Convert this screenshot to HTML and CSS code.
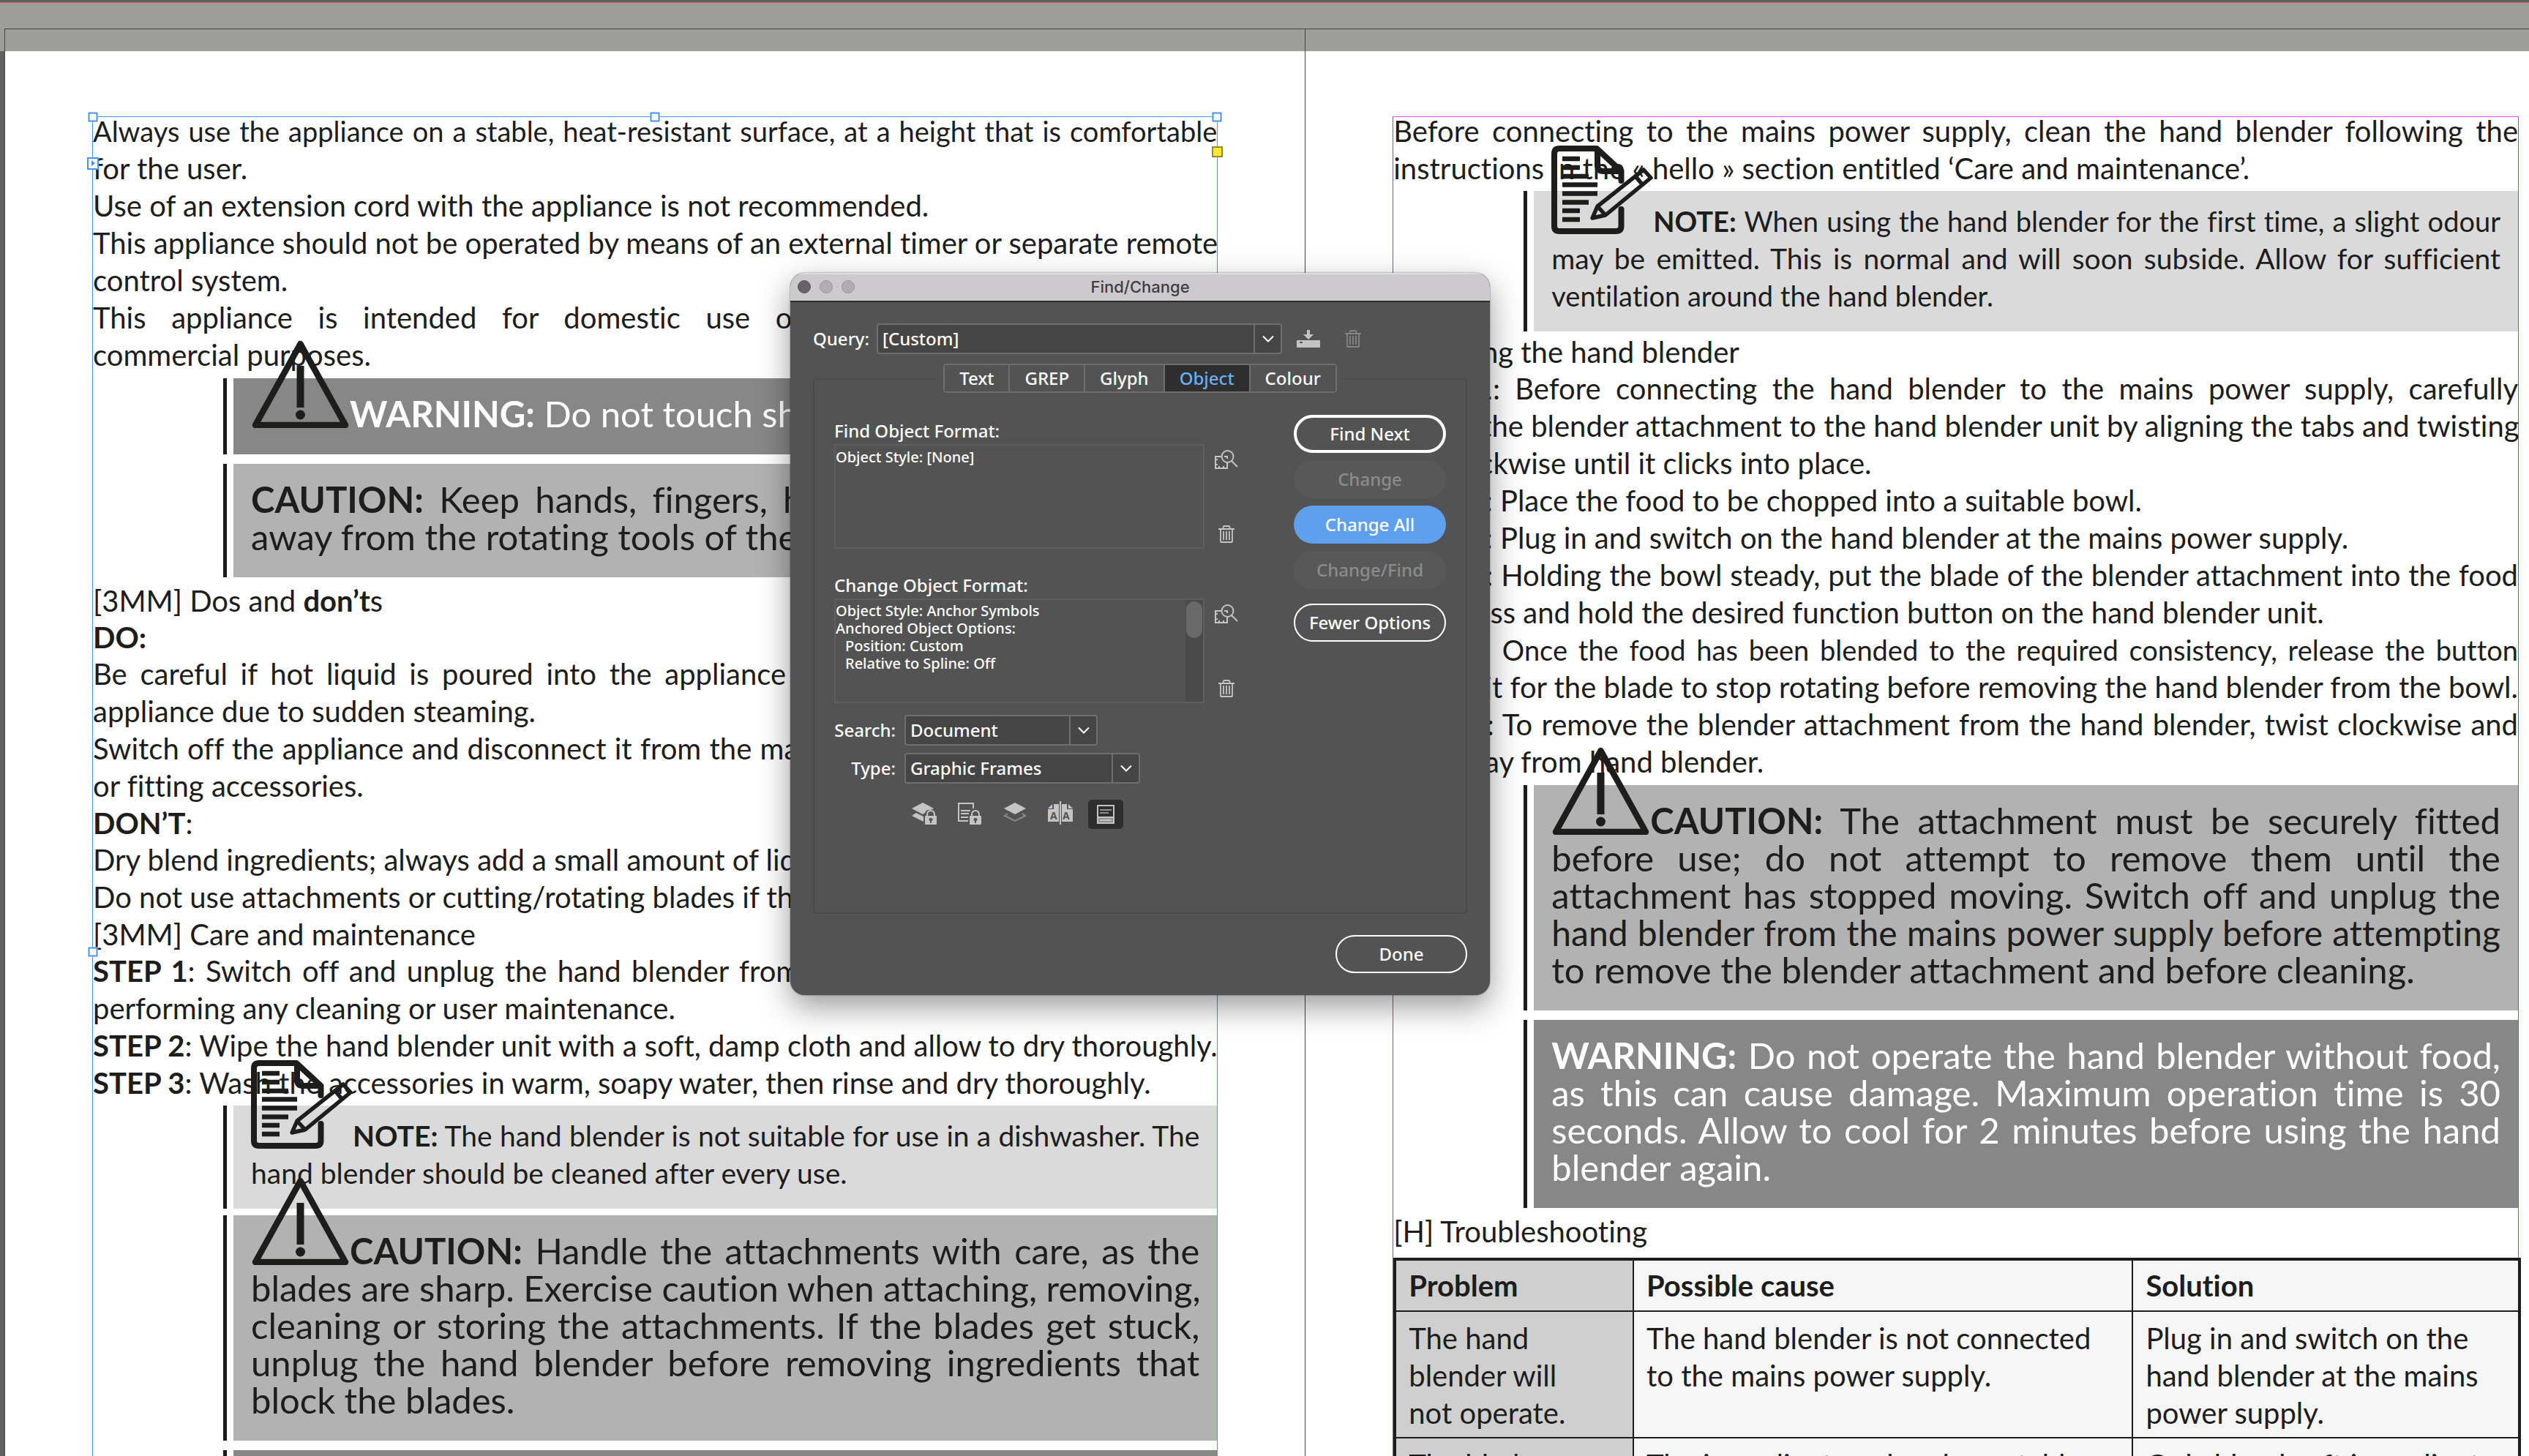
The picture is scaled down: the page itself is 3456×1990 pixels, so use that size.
FILE: index.html
```html
<!DOCTYPE html>
<html lang="en">
<head>
    <meta charset="UTF-8">
    <meta name="viewport" content="width=device-width, initial-scale=1.0">
    <title>Find/Change</title>
    <link rel="stylesheet" href="styles.css">
</head>
<body>
    <svg class="defs" aria-hidden="true">
        <symbol id="i-warning" viewBox="0 0 135 121">
            <path d="M67.500 6 L6 117 H129 Z" fill="none" stroke="#1d1d1b" stroke-width="8.500" stroke-linejoin="round"/>
            <path d="M62.500 36 H72.500 V93 H62.500 Z" fill="#1d1d1b"/>
            <circle cx="67.500" cy="103" r="6.500" fill="#1d1d1b"/>
        </symbol>
        <symbol id="i-note" viewBox="0 0 139 121">
            <g fill="none" stroke="#1d1d1b" stroke-width="8">
                <path d="M95.500 87 V110 Q95.500 117 88 117 H11 Q4 117 4 110 V11 Q4 4 11 4 H62 L95.500 35 V48" stroke-linecap="round" stroke-linejoin="round"/>
                <path d="M63 5 V26 Q63 35 71 35 H95"/>
            </g>
            <path d="M15 18 H39 M15 30 H39 M15 42 H51 M15 53.500 H63 M15 65.500 H63 M15 77.500 H51 M15 89 H39 M15 101 H39" stroke="#1d1d1b" stroke-width="6.500" fill="none"/>
            <path d="M126 33 L136 44 L74 95 L56 99 L63 83 Z M63 83 L74 95 M115 42 L125 54" fill="none" stroke="#1d1d1b" stroke-width="5.500" stroke-linejoin="round"/>
        </symbol>
        <symbol id="i-trash" viewBox="0 0 22 24">
            <path d="M0 5 H22 M3 5 V22 Q3 23 4 23 H18 Q19 23 19 22 V5 M6.500 5 V3 Q6.500 1 8.500 1 H13.500 Q15.500 1 15.500 3 V5 M7 8 V20 M11 8 V20 M15 8 V20" fill="none" stroke="currentColor" stroke-width="1.800"/>
        </symbol>
        <symbol id="i-specify" viewBox="0 0 32 26">
            <path d="M9 9 H1 V25 H17 V17 M13 9 H17 V12 M1 13 H4 M1 20 H4 M6 25 V22 M12 25 V22" fill="none" stroke="currentColor" stroke-width="2"/>
            <circle cx="17.500" cy="9" r="8" fill="none" stroke="currentColor" stroke-width="2"/>
            <path d="M23 15 L31 23" stroke="currentColor" stroke-width="2"/>
        </symbol>
        <symbol id="i-chevron" viewBox="0 0 16 10">
            <path d="M1 1.500 L8 8.500 L15 1.500" fill="none" stroke="#fff" stroke-width="2"/>
        </symbol>
        <symbol id="i-save" viewBox="0 0 32 24">
            <path d="M14 0 H18 V6 H23 L16 13 L9 6 H14 Z M1 14 H31 Q32 14 32 15 V23 Q32 24 31 24 H1 Q0 24 0 23 V15 Q0 14 1 14 Z M4 16 V18 H8 V16 Z" fill="currentColor" fill-rule="evenodd"/>
        </symbol>
        <symbol id="i-lock" viewBox="0 0 16 20">
            <path d="M3 9 V7 Q3 1 8 1 Q13 1 13 7 V9" fill="none" stroke="currentColor" stroke-width="2"/>
            <path d="M1 8 H15 Q16 8 16 9 V19 Q16 20 15 20 H1 Q0 20 0 19 V9 Q0 8 1 8 Z" fill="currentColor"/>
            <path d="M8 11 A2 2 0 0 1 9 15 V18 H7 V15 A2 2 0 0 1 8 11 Z" fill="#535353"/>
        </symbol>
    </svg>

    <div class="ruler-edge"></div>
    <div class="pasteboard"></div>

    <main class="spread">
        <div class="bleed"></div>
        <section class="page page-left">
            <div class="frame frame-selected">
                <i class="handle top-left"></i>
                <i class="handle top-mid"></i>
                <i class="handle top-right"></i>
                <i class="handle mid-left"></i>
                <i class="port"></i>
                <i class="anchor-mark"></i>
                <div class="story">
                    <p>
                        <span class="line full tight">Always use the appliance on a stable, heat-resistant surface, at a height that is comfortable</span>
                        <span class="line">for the user.</span>
                    </p>
                    <p><span class="line">Use of an extension cord with the appliance is not recommended.</span></p>
                    <p>
                        <span class="line full">This appliance should not be operated by means of an external timer or separate remote</span>
                        <span class="line">control system.</span>
                    </p>
                    <p>
                        <span class="line full">This appliance is intended for domestic use only and is not intended for</span>
                        <span class="line">commercial purposes.</span>
                    </p>
                    <div class="callout warning">
                        <svg class="callout-icon"><use href="#i-warning"/></svg>
                        <span class="line indent"><b>WARNING:</b> Do not touch sharp blades.</span>
                    </div>
                    <div class="callout caution">
                        <span class="line full"><b>CAUTION:</b> Keep hands, fingers, hair, clothing and utensils</span>
                        <span class="line">away from the rotating tools of the appliance.</span>
                    </div>
                    <h2>[3MM] Dos and <b>don’t</b>s</h2>
                    <h2><b>DO:</b></h2>
                    <p>
                        <span class="line full">Be careful if hot liquid is poured into the appliance as it can be ejected out of the</span>
                        <span class="line">appliance due to sudden steaming.</span>
                    </p>
                    <p>
                        <span class="line full">Switch off the appliance and disconnect it from the mains power supply when changing</span>
                        <span class="line">or fitting accessories.</span>
                    </p>
                    <h2><b>DON’T</b>:</h2>
                    <p><span class="line">Dry blend ingredients; always add a small amount of liquid.</span></p>
                    <p><span class="line">Do not use attachments or cutting/rotating blades if they are damaged.</span></p>
                    <h2>[3MM] Care and maintenance</h2>
                    <p>
                        <span class="line full"><b>STEP 1</b>: Switch off and unplug the hand blender from the mains power supply before</span>
                        <span class="line">performing any cleaning or user maintenance.</span>
                    </p>
                    <p><span class="line full"><b>STEP 2</b>: Wipe the hand blender unit with a soft, damp cloth and allow to dry thoroughly.</span></p>
                    <p><span class="line"><b>STEP 3</b>: Wash the accessories in warm, soapy water, then rinse and dry thoroughly.</span></p>
                    <div class="callout note">
                        <svg class="callout-icon"><use href="#i-note"/></svg>
                        <span class="line full indent"><b>NOTE:</b> The hand blender is not suitable for use in a dishwasher. The</span>
                        <span class="line">hand blender should be cleaned after every use.</span>
                    </div>
                    <div class="callout caution">
                        <svg class="callout-icon"><use href="#i-warning"/></svg>
                        <span class="line full indent"><b>CAUTION:</b> Handle the attachments with care, as the</span>
                        <span class="line full">blades are sharp. Exercise caution when attaching, removing,</span>
                        <span class="line full">cleaning or storing the attachments. If the blades get stuck,</span>
                        <span class="line full">unplug the hand blender before removing ingredients that</span>
                        <span class="line">block the blades.</span>
                    </div>
                    <div class="callout warning">
                        <span class="line"><b>WARNING:</b> Do not immerse the unit in water.</span>
                    </div>
                </div>
            </div>
        </section>

        <section class="page page-right">
            <div class="frame">
                <div class="story">
                    <p>
                        <span class="line full">Before connecting to the mains power supply, clean the hand blender following the</span>
                        <span class="line">instructions in the « hello » section entitled ‘Care and maintenance’.</span>
                    </p>
                    <div class="callout note">
                        <svg class="callout-icon"><use href="#i-note"/></svg>
                        <span class="line full indent tight"><b>NOTE:</b> When using the hand blender for the first time, a slight odour</span>
                        <span class="line full">may be emitted. This is normal and will soon subside. Allow for sufficient</span>
                        <span class="line tight">ventilation around the hand blender.</span>
                    </div>
                    <h2>[H] Using the hand blender</h2>
                    <p>
                        <span class="line full"><b>STEP 1</b>: Before connecting the hand blender to the mains power supply, carefully</span>
                        <span class="line full">attach the blender attachment to the hand blender unit by aligning the tabs and twisting</span>
                        <span class="line">anticlockwise until it clicks into place.</span>
                    </p>
                    <p><span class="line"><b>STEP 2</b>: Place the food to be chopped into a suitable bowl.</span></p>
                    <p><span class="line"><b>STEP 3</b>: Plug in and switch on the hand blender at the mains power supply.</span></p>
                    <p>
                        <span class="line full"><b>STEP 4</b>: Holding the bowl steady, put the blade of the blender attachment into the food</span>
                        <span class="line">and press and hold the desired function button on the hand blender unit.</span>
                    </p>
                    <p>
                        <span class="line full tight"><b>STEP 5</b>: Once the food has been blended to the required consistency, release the button</span>
                        <span class="line full">and wait for the blade to stop rotating before removing the hand blender from the bowl.</span>
                    </p>
                    <p>
                        <span class="line full"><b>STEP 6</b>: To remove the blender attachment from the hand blender, twist clockwise and</span>
                        <span class="line">pull away from hand blender.</span>
                    </p>
                    <div class="callout caution">
                        <svg class="callout-icon"><use href="#i-warning"/></svg>
                        <span class="line full indent"><b>CAUTION:</b> The attachment must be securely fitted</span>
                        <span class="line full">before use; do not attempt to remove them until the</span>
                        <span class="line full">attachment has stopped moving. Switch off and unplug the</span>
                        <span class="line full tight">hand blender from the mains power supply before attempting</span>
                        <span class="line">to remove the blender attachment and before cleaning.</span>
                    </div>
                    <div class="callout warning">
                        <span class="line full"><b>WARNING:</b> Do not operate the hand blender without food,</span>
                        <span class="line full">as this can cause damage. Maximum operation time is 30</span>
                        <span class="line full">seconds. Allow to cool for 2 minutes before using the hand</span>
                        <span class="line">blender again.</span>
                    </div>
                    <h2>[H] Troubleshooting</h2>
                    <table class="troubleshooting">
                        <thead>
                            <tr><th>Problem</th><th>Possible cause</th><th>Solution</th></tr>
                        </thead>
                        <tbody>
                            <tr>
                                <td>The hand<br>blender will<br>not operate.</td>
                                <td>The hand blender is not connected<br>to the mains power supply.</td>
                                <td>Plug in and switch on the<br>hand blender at the mains<br>power supply.</td>
                            </tr>
                            <tr>
                                <td>The blades</td>
                                <td>The ingredients or bowl are stable</td>
                                <td>Only blend soft ingredients</td>
                            </tr>
                        </tbody>
                    </table>
                </div>
            </div>
        </section>
    </main>

    <div class="dialog" role="dialog" aria-labelledby="dialog-title">
        <header class="titlebar">
            <div class="lights">
                <button class="light close" aria-label="Close"></button>
                <button class="light" aria-label="Minimise"></button>
                <button class="light" aria-label="Zoom"></button>
            </div>
            <h1 id="dialog-title">Find/Change</h1>
        </header>
        <div class="dialog-body">
            <div class="query-row">
                <label for="query">Query:</label>
                <div class="select query">
                    <select id="query"><option>[Custom]</option></select>
                    <svg class="chevron"><use href="#i-chevron"/></svg>
                </div>
                <button class="icon-btn save" aria-label="Save query"><svg width="32" height="24"><use href="#i-save"/></svg></button>
                <button class="icon-btn" aria-label="Delete query" disabled><svg width="22" height="26"><use href="#i-trash"/></svg></button>
            </div>

            <div class="panel">
                <div class="tabs" role="tablist">
                    <button class="tab" role="tab">Text</button>
                    <button class="tab" role="tab">GREP</button>
                    <button class="tab" role="tab">Glyph</button>
                    <button class="tab active" role="tab" aria-selected="true">Object</button>
                    <button class="tab" role="tab">Colour</button>
                </div>
                <div class="panel-columns">
                    <div class="formats">
                        <div class="format">
                            <h3>Find Object Format:</h3>
                            <div class="format-row">
                                <div class="format-box">Object Style: [None]</div>
                                <div class="format-tools">
                                    <button class="icon-btn" aria-label="Specify attributes to find"><svg width="32" height="26"><use href="#i-specify"/></svg></button>
                                    <button class="icon-btn" aria-label="Clear find attributes"><svg width="22" height="24"><use href="#i-trash"/></svg></button>
                                </div>
                            </div>
                        </div>
                        <div class="format">
                            <h3>Change Object Format:</h3>
                            <div class="format-row">
                                <div class="format-box scrolls">
                                    <div>
                                        Object Style: Anchor Symbols<br>
                                        Anchored Object Options:
                                        <div class="sub">Position: Custom<br>Relative to Spline: Off</div>
                                    </div>
                                    <div class="track"><div class="thumb"></div></div>
                                </div>
                                <div class="format-tools">
                                    <button class="icon-btn" aria-label="Specify attributes to change"><svg width="32" height="26"><use href="#i-specify"/></svg></button>
                                    <button class="icon-btn" aria-label="Clear change attributes"><svg width="22" height="24"><use href="#i-trash"/></svg></button>
                                </div>
                            </div>
                        </div>
                        <div class="fields">
                            <label for="search">Search:</label>
                            <div class="select search">
                                <select id="search"><option>Document</option></select>
                                <svg class="chevron"><use href="#i-chevron"/></svg>
                            </div>
                            <label for="type">Type:</label>
                            <div class="select type">
                                <select id="type"><option>Graphic Frames</option></select>
                                <svg class="chevron"><use href="#i-chevron"/></svg>
                            </div>
                        </div>
                        <div class="scope">
                            <button class="scope-btn" aria-label="Include locked layers">
                                <svg width="36" height="32" viewBox="0 0 36 32">
                                    <path d="M16 0 L31 8 L27 10 Q21 9 19 14 L16 16 L1 8 Z M7 14 L1 18 L17 26 V19 Z" fill="currentColor"/>
                                    <use href="#i-lock" x="19" y="10" width="16" height="20"/>
                                </svg>
                            </button>
                            <button class="scope-btn" aria-label="Include locked stories">
                                <svg width="36" height="32" viewBox="0 0 36 32">
                                    <path d="M23 8 V1 H3 V25 H16 M6 11 H19 M6 15 H17 M6 20 H16" fill="none" stroke="currentColor" stroke-width="2"/>
                                    <use href="#i-lock" x="18" y="10" width="16" height="20"/>
                                </svg>
                            </button>
                            <button class="scope-btn" aria-label="Include hidden layers">
                                <svg width="36" height="32" viewBox="0 0 36 32">
                                    <path d="M8 15 L4 18 L18 25 L32 18 L28 15" fill="none" stroke="#8a8a8a" stroke-width="2"/>
                                    <path d="M18 0 L33 8 L18 16 L3 8 Z" fill="currentColor"/>
                                </svg>
                            </button>
                            <button class="scope-btn" aria-label="Include master pages">
                                <svg width="36" height="32" viewBox="0 0 36 32">
                                    <path d="M9 2 H16 V26 H1 V9 H9 Z M7 2 V8 H1 Z M20 2 H27 V9 H35 V26 H20 Z M29 2 V8 H35 Z M17 -2 H19 V30 H17 Z" fill="currentColor"/>
                                    <text x="4" y="23" class="glyph">A</text>
                                    <text x="21" y="23" class="glyph">A</text>
                                </svg>
                            </button>
                            <button class="scope-btn on" aria-label="Include footnotes" aria-pressed="true">
                                <svg width="24" height="26" viewBox="0 0 24 26">
                                    <path d="M1 1 H23 V25 H1 Z" fill="none" stroke="currentColor" stroke-width="2"/>
                                    <path d="M4 7 H20 M4 11 H16" stroke="#8f8f8f" stroke-width="2"/>
                                    <path d="M1 16 H23 V25 H1 Z" fill="currentColor"/>
                                    <path d="M3 19 H21 V23 H3 Z" fill="none" stroke="#8f8f8f" stroke-width="2"/>
                                </svg>
                            </button>
                        </div>
                    </div>
                    <div class="actions">
                        <button class="btn default">Find Next</button>
                        <button class="btn" disabled>Change</button>
                        <button class="btn primary">Change All</button>
                        <button class="btn" disabled>Change/Find</button>
                        <button class="btn outline fewer">Fewer Options</button>
                    </div>
                </div>
            </div>

            <footer class="dialog-footer">
                <button class="btn outline done">Done</button>
            </footer>
        </div>
    </div>
</body>
</html>
```
FILE: styles.css
```css
:root {
    --ink: #1d1d1b;
    --blue: #4b93ee;
    --purple: #9a3fe0;
    --panel: #535353;
    --panel-line: #4a4a4a;
    --field: #454545;
    --field-line: #6e6e6e;
    --icon: #c4c4c4;
}

* {
    margin: 0;
    padding: 0;
    box-sizing: border-box;
}

body {
    height: 100vh;
    overflow: hidden;
    display: flex;
    flex-direction: column;
    position: relative;
    background: #9d9d9a;
    color: var(--ink);
    font-family: Lato, sans-serif;
    font-size: 40px;
    line-height: 51px;
    font-variant-ligatures: none;
}

button,
select {
    font: inherit;
    color: inherit;
    background: none;
    border: none;
}

.defs {
    position: absolute;
    width: 0;
    height: 0;
}

/* document window */
.ruler-edge {
    flex: none;
    height: 4px;
    background: #5e5e5e;
    border-bottom: 1px solid #e0525f;
}

.pasteboard {
    flex: none;
    height: 35px;
}

.spread {
    flex: 1;
    min-height: 0;
    display: grid;
    grid-template-columns: 17fr 16fr;
    grid-template-rows: 31px 1fr;
    padding-left: 6px;
    overflow: hidden;
    background: linear-gradient(#9d9d9a 31px, #606060 31px);
}

.bleed {
    grid-column: 1 / -1;
    display: grid;
    grid-template-columns: inherit;
    border-top: 1px solid #444;
    border-left: 1px solid #444;
}

.bleed::before {
    content: "";
    border-right: 1px solid #444;
}

.page {
    min-height: 0;
    min-width: 0;
    background: #fff;
    border-left: 1px solid #444;
    padding-top: 89px;
}

.page-left {
    padding-left: 119px;
    padding-right: 119px;
}

.page-right {
    padding-left: 119px;
    padding-right: 14px;
}

.frame {
    position: relative;
    height: 100%;
    border: 1px solid var(--purple);
    border-top-color: #e04fe8;
    border-bottom: none;
}

.frame-selected {
    border-color: var(--blue);
}

.story {
    display: flex;
    flex-direction: column;
    margin-top: -6px;
}

.line {
    display: block;
    white-space: nowrap;
}

.full {
    text-align-last: justify;
}

.tight {
    font-size: 38px;
}

.story h2 {
    font-size: 40px;
    font-weight: 400;
    line-height: 50px;
}

/* frame handles */
.handle {
    position: absolute;
    width: 13px;
    height: 13px;
    background: #fff;
    border: 2px solid var(--blue);
    transform: translate(-50%, -50%);
}

.top-left { left: 0; top: 0; }
.top-mid { left: 50%; top: 0; }
.top-right { left: 100%; top: 0; }
.mid-left { left: 0; top: 1141px; }

.port {
    position: absolute;
    left: -8px;
    top: 55px;
    width: 16px;
    height: 17px;
    background: #fff;
    border: 2px solid var(--blue);
}

.port::after {
    content: "";
    position: absolute;
    left: 4px;
    top: 2px;
    border-left: 5px solid var(--blue);
    border-top: 4px solid transparent;
    border-bottom: 4px solid transparent;
}

.anchor-mark {
    position: absolute;
    right: -8px;
    top: 40px;
    width: 15px;
    height: 15px;
    background: #ffe92e;
    border: 2px solid #8a8a3c;
}

/* callouts */
.callout {
    position: relative;
    margin: 6px 0 7px 192px;
    padding: 23px 24px 30px;
    font-size: 49px;
}

.callout .tight {
    font-size: 48px;
}

.callout::before {
    content: "";
    position: absolute;
    left: -14px;
    top: 0;
    bottom: 0;
    width: 5px;
    background: var(--ink);
}

.callout-icon {
    position: absolute;
    left: 24px;
    top: -53px;
    width: 135px;
    height: 121px;
}

.indent {
    padding-left: 135px;
}

.warning {
    background: #878787;
    color: #fff;
}

.caution {
    background: #b2b2b2;
}

.note {
    margin: 5px 0 3px 192px;
    padding: 16px 24px 23px;
    background: #dadada;
    font-size: 39px;
}

.note .tight {
    font-size: 38px;
}

.note .callout-icon {
    top: -62px;
    width: 139px;
}

.note .indent {
    padding-left: 139px;
}

/* troubleshooting table */
.troubleshooting {
    width: calc(100% + 4px);
    margin-top: 11px;
    border-collapse: collapse;
    table-layout: fixed;
    border: 4px solid var(--ink);
    background: #f6f6f6;
}

.troubleshooting th,
.troubleshooting td {
    border: 2px solid var(--ink);
    padding: 11px 0 7px 17px;
    text-align: left;
    vertical-align: top;
    white-space: nowrap;
}

.troubleshooting th {
    padding: 9px 0 8px 17px;
}

.troubleshooting th:first-child {
    width: 21.2%;
}

.troubleshooting th:last-child {
    width: 34.4%;
}

.troubleshooting th:first-child,
.troubleshooting td:first-child {
    background: #cfcfcf;
}

/* find/change dialog */
.dialog {
    position: absolute;
    left: 31.25%;
    top: 373px;
    width: 956px;
    border-radius: 20px;
    overflow: hidden;
    background: var(--panel);
    color: #fff;
    font-family: "Noto Sans", "Open Sans", sans-serif;
    font-size: 24px;
    font-weight: 500;
    line-height: 30px;
    box-shadow: 0 16px 44px rgba(0, 0, 0, 0.4), 0 0 2px rgba(0, 0, 0, 0.6);
}

.titlebar {
    position: relative;
    display: flex;
    align-items: center;
    justify-content: center;
    height: 40px;
    background: #cdcacf;
    border-bottom: 2px solid #2c2c2c;
    box-shadow: inset 0 2px #dedce0;
}

.titlebar h1 {
    font-family: Inter, sans-serif;
    font-size: 22px;
    font-weight: 500;
    color: #3f3d41;
}

.lights {
    position: absolute;
    left: 10px;
    display: flex;
    gap: 12px;
}

.light {
    width: 18px;
    height: 18px;
    border-radius: 50%;
    background: #b1aeb3;
    border: 1px solid #9a979c;
}

.light.close {
    background: #656367;
    border-color: #57555a;
}

.dialog-body {
    padding: 29px 31px 30px;
}

.query-row {
    display: flex;
    align-items: center;
}

.query-row label {
    width: 87px;
}

.select {
    position: relative;
    height: 42px;
    background: var(--field);
    border: 2px solid var(--field-line);
    border-radius: 4px;
}

.select select {
    appearance: none;
    width: 100%;
    height: 100%;
    padding-left: 6px;
}

.select::after {
    content: "";
    position: absolute;
    right: 35px;
    top: 0;
    bottom: 0;
    width: 2px;
    background: var(--field-line);
}

.chevron {
    position: absolute;
    right: 9px;
    top: 14px;
    width: 16px;
    height: 10px;
}

.query {
    width: 554px;
}

.search {
    width: 264px;
}

.type {
    width: 322px;
}

.icon-btn {
    display: flex;
    color: var(--icon);
}

.icon-btn:disabled {
    color: #858585;
}

.save {
    margin: 0 34px 0 20px;
}

.panel {
    margin-top: 33px;
    border: 2px solid var(--panel-line);
    border-radius: 4px;
    height: 732px;
}

.tabs {
    display: flex;
    width: max-content;
    margin: -22px auto 0;
    background: var(--field-line);
    border: 2px solid var(--field-line);
    border-radius: 4px;
    gap: 2px;
    outline: 8px solid var(--panel);
}

.tab {
    height: 36px;
    padding: 0 20px;
    background: var(--panel);
}

.tab.active {
    background: #2e2e2e;
    color: #6aaef5;
}

.panel-columns {
    display: flex;
    justify-content: space-between;
    padding: 30px 27px 0;
}

.format {
    margin-bottom: 28px;
}

.format h3 {
    padding-top: 4px;
    font-size: 24px;
    font-weight: 500;
    line-height: 36px;
}

.format-row {
    display: flex;
    gap: 14px;
}

.format-box {
    width: 506px;
    height: 143px;
    border: 2px solid #5e5e5e;
    font-size: 20px;
    line-height: 24px;
    padding-top: 4px;
}

.scrolls {
    display: flex;
    justify-content: space-between;
    padding-top: 0;
}

.scrolls > div:first-child {
    padding-top: 3px;
}

.sub {
    padding-left: 13px;
}

.track {
    width: 24px;
    padding: 2px 1px;
    background: #4a4a4a;
}

.thumb {
    height: 50px;
    border-radius: 11px;
    background: #696969;
}

.format-tools {
    display: flex;
    flex-direction: column;
    justify-content: space-between;
    align-items: center;
    padding: 8px 0;
}

.fields {
    display: grid;
    grid-template-columns: 84px max-content;
    align-items: center;
    gap: 10px 12px;
    margin-top: -12px;
}

.fields label {
    text-align: right;
}

.scope {
    display: flex;
    align-items: center;
    gap: 14px;
    margin: 22px 0 0 99px;
}

.scope-btn {
    display: flex;
    align-items: center;
    justify-content: center;
    width: 48px;
    height: 40px;
    border-radius: 5px;
    color: var(--icon);
}

.scope-btn svg {
    overflow: visible;
}

.scope-btn.on {
    background: #2e2e2e;
}

.glyph {
    font: 700 14px "Noto Sans", sans-serif;
    fill: #535353;
}

.actions {
    display: flex;
    flex-direction: column;
    gap: 10px;
    width: 208px;
}

.btn {
    height: 52px;
    border-radius: 26px;
    text-align: center;
}

.btn:disabled {
    background: #585858;
    color: #8c8c8c;
}

.default {
    border: 4px solid #fff;
}

.primary {
    background: #5e9fee;
}

.outline {
    border: 2px solid #fff;
}

.fewer {
    margin-top: 10px;
}

.dialog-footer {
    display: flex;
    justify-content: flex-end;
    margin-top: 29px;
}

.done {
    width: 180px;
}
```
